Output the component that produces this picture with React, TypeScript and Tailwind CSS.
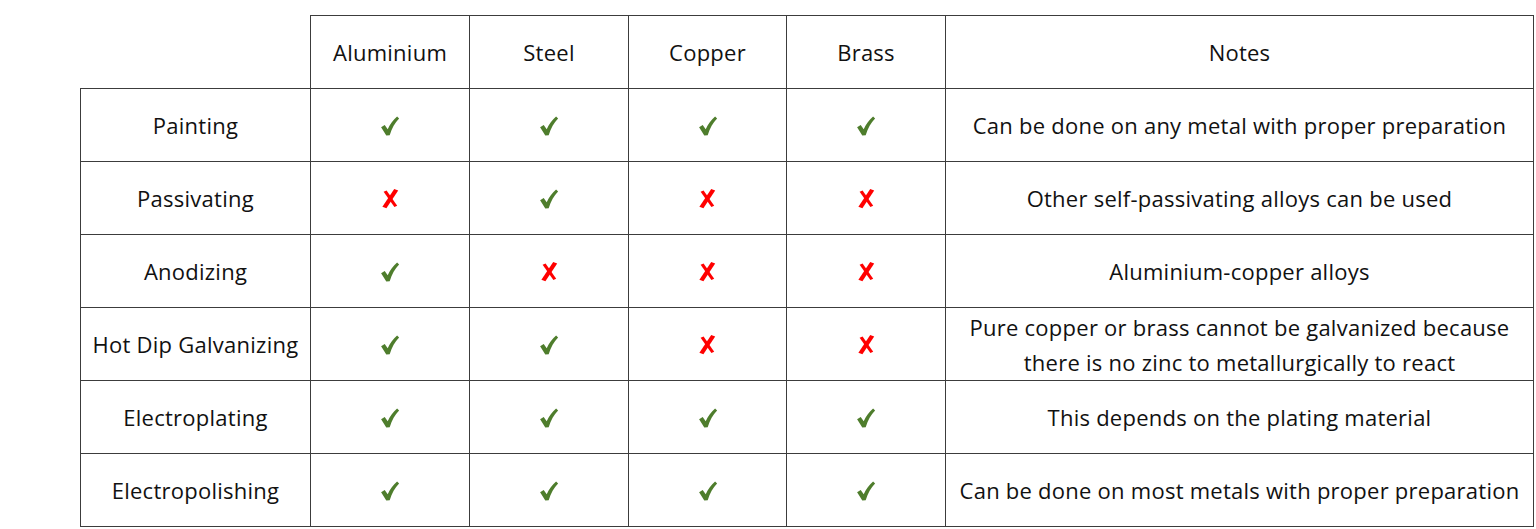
import React from 'react';

type Mark = 'y' | 'n';

const rows: { name: string; marks: Mark[]; note: React.ReactNode }[] = [
  { name: 'Painting', marks: ['y', 'y', 'y', 'y'], note: 'Can be done on any metal with proper preparation' },
  { name: 'Passivating', marks: ['n', 'y', 'n', 'n'], note: 'Other self-passivating alloys can be used' },
  { name: 'Anodizing', marks: ['y', 'n', 'n', 'n'], note: 'Aluminium-copper alloys' },
  {
    name: 'Hot Dip Galvanizing',
    marks: ['y', 'y', 'n', 'n'],
    note: (
      <>
        Pure copper or brass cannot be galvanized because
        <br />
        there is no zinc to metallurgically to react
      </>
    ),
  },
  { name: 'Electroplating', marks: ['y', 'y', 'y', 'y'], note: 'This depends on the plating material' },
  { name: 'Electropolishing', marks: ['y', 'y', 'y', 'y'], note: 'Can be done on most metals with proper preparation' },
];

function Check() {
  return (
    <svg width="20" height="20" viewBox="0 0 19 20" className="mx-auto block">
      <path
        d="M0.6 11.2 L4.2 9 L7.2 13.2 C9.6 8.4 12.6 4 16.6 0.6 L18.6 2.4 C14.4 6.6 11.4 12.2 9.2 19.2 L5.8 19.6 Z"
        fill="#4e7d2c"
      />
    </svg>
  );
}

function Cross() {
  return (
    <svg width="17" height="21" viewBox="0 0 17 20" className="mx-auto block">
      <path d="M1.6 3.2 L4.6 2 L15.2 17.2 L12.4 18.6 Z" fill="#ff0000" />
      <path d="M12.2 0.6 L16.2 2 L4.4 19.8 L0.4 18.2 Z" fill="#ff0000" />
    </svg>
  );
}

const cell = 'border border-[#3c3c3c] text-center align-middle pt-[1px]';

export default function App() {
  return (
    <div className="min-h-[529px] w-[1536px] bg-white pt-[15px] pl-[80px] font-['Open_Sans',sans-serif] text-[22px] tracking-[0.25px] text-[#111]">
      <table className="table-fixed border-collapse w-[1453px]">
        <colgroup>
          <col className="w-[230px]" />
          <col className="w-[159px]" />
          <col className="w-[159px]" />
          <col className="w-[158px]" />
          <col className="w-[159px]" />
          <col className="w-[588px]" />
        </colgroup>
        <thead>
          <tr className="h-[73px]">
            <th className="border-0 font-normal"></th>
            {['Aluminium', 'Steel', 'Copper', 'Brass', 'Notes'].map((h) => (
              <th key={h} className={`${cell} font-normal`}>
                {h}
              </th>
            ))}
          </tr>
        </thead>
        <tbody>
          {rows.map((r) => (
            <tr key={r.name} className="h-[73px]">
              <td className={cell}>{r.name}</td>
              {r.marks.map((m, i) => (
                <td key={i} className={cell}>
                  {m === 'y' ? <Check /> : <Cross />}
                </td>
              ))}
              <td className={`${cell} leading-[35px]`}>{r.note}</td>
            </tr>
          ))}
        </tbody>
      </table>
    </div>
  );
}
